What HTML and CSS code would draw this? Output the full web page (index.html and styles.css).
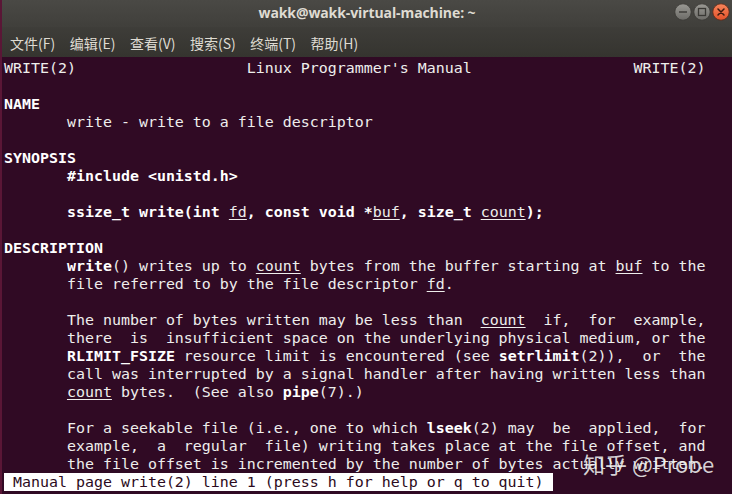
FILE: index.html
```html
<!DOCTYPE html>
<html lang="zh-CN">
<head>
<meta charset="utf-8">
<title>wakk@wakk-virtual-machine: ~</title>
<link rel="stylesheet" href="styles.css">
</head>
<body>
<div class="screen">
  <header class="titlebar">
    <div class="spacer"></div>
    <div class="title">wakk@wakk-virtual-machine: ~</div>
    <div class="controls">
      <svg class="btn" width="18" height="18" viewBox="0 0 18 18">
        <defs>
          <linearGradient id="g1" x1="0" y1="0" x2="0" y2="1">
            <stop offset="0" stop-color="#9a9994"/>
            <stop offset="1" stop-color="#6c6b67"/>
          </linearGradient>
          <linearGradient id="g2" x1="0" y1="0" x2="0" y2="1">
            <stop offset="0" stop-color="#f7855b"/>
            <stop offset="1" stop-color="#e2522a"/>
          </linearGradient>
        </defs>
        <circle cx="9" cy="9" r="8.2" fill="url(#g1)" stroke="#3a3935" stroke-width="0.8"/>
        <line x1="5" y1="9" x2="13" y2="9" stroke="#3a3935" stroke-width="1.4"/>
      </svg>
      <svg class="btn" width="18" height="18" viewBox="0 0 18 18">
        <circle cx="9" cy="9" r="8.2" fill="url(#g1)" stroke="#3a3935" stroke-width="0.8"/>
        <rect x="5.5" y="5.5" width="7" height="7" fill="none" stroke="#3a3935" stroke-width="1.3"/>
      </svg>
      <svg class="btn" width="18" height="18" viewBox="0 0 18 18">
        <circle cx="9" cy="9" r="8.2" fill="url(#g2)" stroke="#5a2a1a" stroke-width="0.8"/>
        <path d="M6 6 L12 12 M12 6 L6 12" stroke="#3c1a10" stroke-width="1.5" stroke-linecap="round"/>
      </svg>
    </div>
  </header>
  <nav class="menubar">
    <span class="menu">文件(F)</span>
    <span class="menu">编辑(E)</span>
    <span class="menu">查看(V)</span>
    <span class="menu">搜索(S)</span>
    <span class="menu">终端(T)</span>
    <span class="menu">帮助(H)</span>
  </nav>
  <main class="term">
<pre class="lines"><div class="ln">WRITE(2)                   Linux Programmer's Manual                  WRITE(2)</div><div class="ln"> </div><div class="ln"><b>NAME</b></div><div class="ln">       write - write to a file descriptor</div><div class="ln"> </div><div class="ln"><b>SYNOPSIS</b></div><div class="ln">       <b>#include &lt;unistd.h&gt;</b></div><div class="ln"> </div><div class="ln">       <b>ssize_t write(int </b><u>fd</u><b>, const void *</b><u>buf</u><b>, size_t </b><u>count</u><b>);</b></div><div class="ln"> </div><div class="ln"><b>DESCRIPTION</b></div><div class="ln">       <b>write</b>() writes up to <u>count</u> bytes from the buffer starting at <u>buf</u> to the</div><div class="ln">       file referred to by the file descriptor <u>fd</u>.</div><div class="ln"> </div><div class="ln">       The number of bytes written may be less than  <u>count</u>  if,  for  example,</div><div class="ln">       there  is  insufficient space on the underlying physical medium, or the</div><div class="ln">       <b>RLIMIT_FSIZE</b> resource limit is encountered (see <b>setrlimit</b>(2)),  or  the</div><div class="ln">       call was interrupted by a signal handler after having written less than</div><div class="ln">       <u>count</u> bytes.  (See also <b>pipe</b>(7).)</div><div class="ln"> </div><div class="ln">       For a seekable file (i.e., one to which <b>lseek</b>(2) may  be  applied,  for</div><div class="ln">       example,  a  regular  file) writing takes place at the file offset, and</div><div class="ln">       the file offset is incremented by the number of bytes actually written.</div><div class="ln"><span class="status"> Manual page write(2) line 1 (press h for help or q to quit) </span></div></pre>
    <div class="watermark">知乎 @Probe</div>
  </main>
</div>
</body>
</html>
```
FILE: styles.css
```css
html, body {
  margin: 0;
  padding: 0;
}
body {
  width: 732px;
  height: 494px;
  overflow: hidden;
  background: #5a1636;
}
.screen {
  width: 730px;
  height: 494px;
  margin-left: 2px;
  display: flex;
  flex-direction: column;
  background: #300a24;
  overflow: hidden;
}
.titlebar {
  height: 27px;
  flex: none;
  display: grid;
  grid-template-columns: 1fr auto 1fr;
  align-items: center;
  background: linear-gradient(#4a4945, #403f3b);
}
.title {
  font-family: "Open Sans", "Noto Sans", sans-serif;
  font-weight: 700;
  font-size: 14px;
  color: #dfdbd2;
  letter-spacing: -0.1px;
  margin-top: -2px;
}
.controls {
  justify-self: end;
  display: flex;
  gap: 1px;
  padding-right: 2px;
  margin-top: -4px;
}
.btn {
  display: block;
}
.menubar {
  height: 30px;
  flex: none;
  display: flex;
  align-items: center;
  gap: 14.5px;
  padding-left: 8px;
  background: linear-gradient(#3e3d39, #35342f);
  font-family: "Noto Sans CJK SC", "Noto Sans", sans-serif;
  font-size: 14px;
  color: #dfdbd2;
}
.menu {
  line-height: 20px;
  padding-top: 2px;
}
.term {
  position: relative;
  flex: 1;
  padding-left: 2px;
  padding-top: 2px;
}
.lines {
  margin: 0;
  font-family: "DejaVu Sans Mono", monospace;
  font-size: 14.95px;
  line-height: 18px;
  color: #eeeeec;
}
.ln {
  height: 18px;
}
.lines b {
  font-weight: 700;
  color: #ffffff;
}
.lines u {
  text-decoration: underline;
  text-underline-offset: 2px;
}
.status {
  background: #ffffff;
  color: #2c0a20;
}
.watermark {
  position: absolute;
  left: 581px;
  top: 391px;
  font-family: "Noto Sans CJK SC", "Noto Sans", sans-serif;
  font-size: 22px;
  line-height: 30px;
  color: rgba(255, 255, 255, 0.82);
  text-shadow: 0 0 2px rgba(0, 0, 0, 0.3);
}
```
